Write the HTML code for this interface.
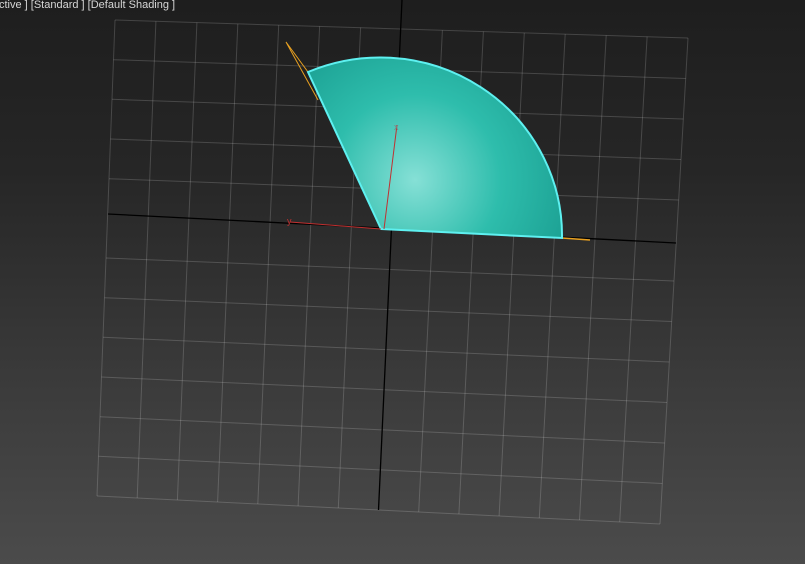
<!DOCTYPE html>
<html><head><style>
html,body{margin:0;padding:0;width:805px;height:564px;overflow:hidden;background:linear-gradient(#1e1e1e,#262626 30%,#3c3c3c 70%,#4b4b4b);}
.t{position:absolute;left:-1px;top:-1px;font:11px "Liberation Sans",sans-serif;color:#d6d6d6;white-space:pre;}
svg{position:absolute;left:0;top:0}
</style></head><body>
<svg width="805" height="564">
<defs><radialGradient id="g" cx="415" cy="180" r="190" gradientUnits="userSpaceOnUse">
<stop offset="0" stop-color="#86e0d6"/><stop offset="0.45" stop-color="#2ebdac"/><stop offset="1" stop-color="#15968a"/></radialGradient></defs>
<g stroke="#ffffff" stroke-opacity="0.17" stroke-width="1" fill="none">
<path d="M115 20L97 496M155.9 21.3L137.2 498M196.9 22.6L177.4 500M237.8 23.9L217.6 502M278.7 25.1L257.8 504M319.6 26.4L298.1 506M360.6 27.7L338.3 508M442.4 30.3L418.7 512M483.4 31.6L458.9 514M524.3 32.9L499.1 516M565.2 34.1L539.3 518M606.2 35.4L579.5 520M647.1 36.7L619.7 522M688 38L660 524"/>
<path d="M115 20L688 38M113.5 59.7L685.7 78.5M112 99.3L683.3 119M110.5 139L681 159.5M109 178.7L678.7 200M106 258L674 281M104.5 297.7L671.7 321.5M103 337.3L669.3 362M101.5 377L667 402.5M100 416.7L664.7 443M98.5 456.3L662.3 483.5M97 496L660 524"/>
</g>
<g stroke="#000" stroke-width="1.3"><path d="M402 0L378.5 510"/><path d="M108 214L676 243"/></g>
<path d="M286 42L318 100M286 42L308 72" stroke="#e8a020" stroke-width="1"/>
<path d="M562 238L590 240" stroke="#e8a020" stroke-width="1.5"/>
<path d="M381 229L308 72A182 178 0 0 1 562 238Z" fill="url(#g)" stroke="#5ef0f0" stroke-width="2"/>
<path d="M290 222L381 229M384 229L397 125" stroke="#c03030" stroke-width="1"/>
<text x="287" y="224" fill="#c03030" font-size="9" font-family="Liberation Sans">y</text>
<text x="394" y="130" fill="#808080" font-size="9" font-family="Liberation Sans">x</text>
</svg>
<div class="t">ctive ] [Standard ] [Default Shading ]</div>
</body></html>
